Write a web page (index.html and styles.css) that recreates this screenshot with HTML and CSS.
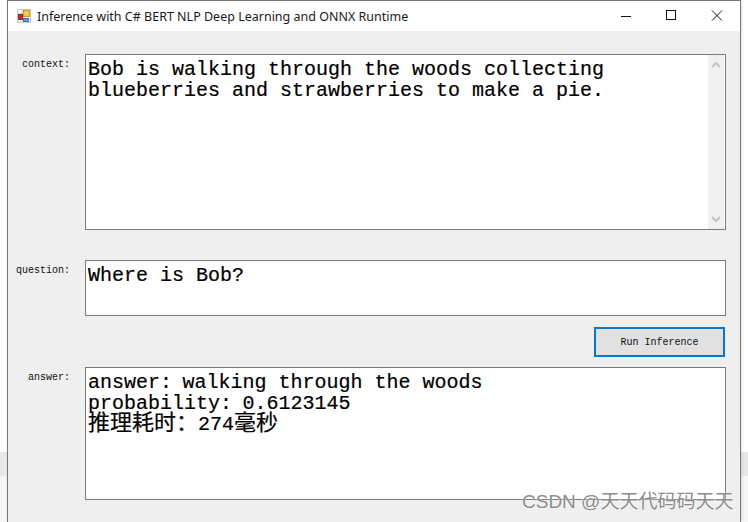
FILE: index.html
```html
<!DOCTYPE html>
<html lang="en">

<head>
    <meta charset="UTF-8">
    <meta name="viewport" content="width=device-width, initial-scale=1.0">
    <title>Inference with C# BERT NLP Deep Learning and ONNX Runtime</title>
    <link rel="stylesheet" href="styles.css">
</head>

<body>
    <div class="window">
        <div class="title-bar">
            <svg class="app-icon" width="14" height="14" viewBox="0 0 14 14">
                <rect x="0.5" y="0.5" width="13" height="13" fill="#f4f4f4" stroke="#c8c8c8" />
                <path d="M0 4.5H6M5.5 0V14M0 10.5H6" stroke="#d0d0d0" fill="none" />
                <rect x="1.5" y="5.5" width="4" height="5" fill="#d8261c" stroke="#9c2a22" />
                <rect x="6.5" y="1.5" width="6" height="6" fill="#f7c93e" stroke="#c9962a" />
                <rect x="6.5" y="9.5" width="5" height="3" fill="#5b9be6" stroke="#3f78c4" />
            </svg>
            <div class="title-text">Inference with C# BERT NLP Deep Learning and ONNX Runtime</div>
            <div class="caption-buttons">
                <svg class="caption-btn" width="46" height="30" viewBox="0 0 46 30">
                    <path d="M19 15.5H29" stroke="#111" fill="none" />
                </svg>
                <svg class="caption-btn" width="46" height="30" viewBox="0 0 46 30">
                    <rect x="18.5" y="9.5" width="9" height="9" stroke="#111" fill="none" />
                </svg>
                <svg class="caption-btn" width="46" height="30" viewBox="0 0 46 30">
                    <path d="M18 9.5L28 19.5M28 9.5L18 19.5" stroke="#111" fill="none" />
                </svg>
            </div>
        </div>
        <div class="form-body">
            <div class="field-label">context:</div>
            <div class="text-box context-box">
                <div class="box-text">Bob is walking through the woods collecting blueberries and strawberries to make a pie.</div>
                <div class="scroll-bar">
                    <svg width="16" height="10" viewBox="0 0 16 10">
                        <path d="M4 7L8 3L12 7" stroke="#c4c4c4" stroke-width="2" fill="none" />
                    </svg>
                    <svg width="16" height="10" viewBox="0 0 16 10">
                        <path d="M4 3L8 7L12 3" stroke="#c4c4c4" stroke-width="2" fill="none" />
                    </svg>
                </div>
            </div>

            <div class="field-label">question:</div>
            <div class="text-box question-box">
                <div class="box-text">Where is Bob?</div>
            </div>

            <div class="button-row">
                <div class="run-button">Run Inference</div>
            </div>

            <div class="field-label">answer:</div>
            <div class="text-box answer-box">
                <div class="box-text">answer<span class="colon">:</span> walking through the woods<br>probability<span class="colon">:</span> 0.6123145<br><span class="cjk">推理耗时：</span>274<span class="cjk">毫秒</span></div>
            </div>
        </div>
    </div>
    <div class="watermark">CSDN @天天代码码天天</div>
</body>

</html>
```

FILE: styles.css
```css
html,
body {
    margin: 0;
    height: 100%;
    overflow: hidden;
}

body {
    background: linear-gradient(#ffffff 452px, #e6e8ea 452px, #e6e8ea 476px, #f6f6f6 476px);
    font-family: "Liberation Mono", monospace;
}

.window {
    width: 734px;
    height: 522px;
    margin-left: 7px;
    box-sizing: border-box;
    border: 1px solid #777777;
    border-bottom: 0;
    background-color: #efefef;
    box-shadow: 1px 0 3px rgba(0, 0, 0, 0.12);
}

.title-bar {
    display: flex;
    align-items: center;
    height: 30px;
    background-color: #ffffff;
}

.app-icon {
    margin-left: 9px;
    flex-shrink: 0;
}

.title-text {
    margin-left: 6px;
    font-family: "Noto Sans", sans-serif;
    font-size: 12.5px;
    color: #1a1a1a;
    white-space: nowrap;
}

.caption-buttons {
    display: flex;
    margin-left: auto;
}

.form-body {
    display: grid;
    grid-template-columns: 62px 641px;
    column-gap: 15px;
    padding-top: 23px;
    justify-content: start;
}

.field-label {
    font-size: 10px;
    line-height: 12px;
    text-align: right;
    color: #111111;
    padding-top: 5px;
}

.text-box {
    box-sizing: border-box;
    display: flex;
    border: 1px solid #7a7a7a;
    background-color: #ffffff;
}

.box-text {
    flex: 1;
    padding: 4px 2px;
    font-size: 20px;
    line-height: 21px;
    color: #000000;
    -webkit-text-stroke: 0.2px #000000;
}

.colon {
    letter-spacing: -1.5px;
}

.cjk {
    font-family: "Noto Sans CJK SC", sans-serif;
    font-size: 22px;
    line-height: 0;
}

.context-box {
    height: 176px;
    margin-bottom: 30px;
}

.context-box .box-text {
    padding-right: 100px;
}

.scroll-bar {
    display: flex;
    flex-direction: column;
    justify-content: space-between;
    box-sizing: border-box;
    width: 16px;
    margin-right: 1px;
    padding: 5px 0;
    background-color: #f0f0f0;
}

.question-box {
    height: 56px;
}

.button-row {
    grid-column: 2;
    display: flex;
    justify-content: flex-end;
    margin: 11px 0 10px;
}

.run-button {
    box-sizing: border-box;
    width: 131px;
    height: 30px;
    margin-right: 1px;
    border: 2px solid #0078d7;
    background-color: #e1e1e1;
    font-size: 10px;
    line-height: 28px;
    text-align: center;
    color: #111111;
}

.answer-box {
    height: 133px;
}

/* sits over the bottom right corner of the form */
.watermark {
    position: absolute;
    left: 522px;
    top: 490px;
    font-family: "Liberation Sans", "Noto Sans CJK SC", sans-serif;
    font-size: 19px;
    line-height: 24px;
    color: #8c8c8c;
    text-shadow: 0 0 2px #ffffff;
    white-space: nowrap;
}
```
